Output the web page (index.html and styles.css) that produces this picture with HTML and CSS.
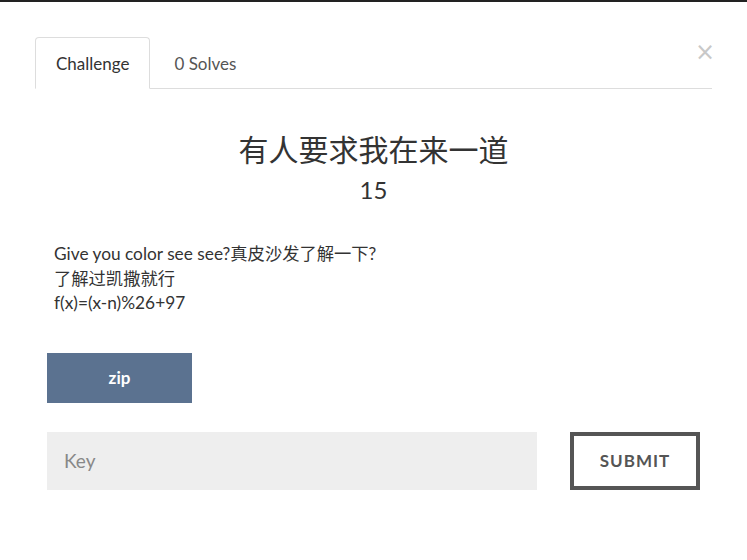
FILE: index.html
```html
<!DOCTYPE html>
<html lang="zh">
<head>
<meta charset="utf-8">
<title>Challenge</title>
<link rel="stylesheet" href="styles.css">
</head>
<body>
<div class="topbar"></div>
<div class="modal">
  <div class="close">&times;</div>
  <ul class="tabs">
    <li class="tab active">Challenge</li>
    <li class="tab">0 Solves</li>
  </ul>
  <h2 class="title">有人要求我在来一道</h2>
  <h3 class="value">15</h3>
  <div class="desc">
    <p>Give you color see see?真皮沙发了解一下?<br>了解过凯撒就行<br>f(x)=(x-n)%26+97</p>
  </div>
  <div class="files">
    <a class="file-btn">zip</a>
  </div>
  <div class="submit-row">
    <input class="key" type="text" placeholder="Key">
    <button class="submit">SUBMIT</button>
  </div>
</div>
</body>
</html>
```
FILE: styles.css
```css
html, body {
  margin: 0;
  padding: 0;
  background: #fff;
  font-family: "Lato", "Noto Sans CJK SC", sans-serif;
  color: #333;
}
.topbar {
  height: 2px;
  background: #222;
}
.modal {
  position: relative;
  margin: 0 35px;
  padding-top: 35px;
}
.close {
  position: absolute;
  right: -3px;
  top: 35px;
  font-size: 24px;
  line-height: 30px;
  color: #c8c8c8;
  font-family: "DejaVu Sans", sans-serif;
}
.tabs {
  list-style: none;
  margin: 0;
  padding: 0;
  display: flex;
  border-bottom: 1px solid #ddd;
}
.tab {
  padding: 0 20px;
  height: 50px;
  line-height: 52px;
  font-size: 17px;
  color: #555;
  margin-right: 3px;
  margin-bottom: -1px;
  border: 1px solid transparent;
  border-radius: 4px 4px 0 0;
}
.tab.active {
  color: #333;
  border-color: #ddd;
  border-bottom-color: #fff;
  background: #fff;
}
.title {
  margin: 42px 0 0;
  text-align: center;
  font-weight: 400;
  font-size: 30px;
  line-height: 36px;
  color: #333;
}
.value {
  margin: 8px 0 0;
  text-align: center;
  font-weight: 400;
  font-size: 24px;
  line-height: 30px;
  color: #333;
}
.desc {
  padding: 0 19px;
  margin-top: 37px;
}
.desc p {
  margin: 0;
  font-size: 17.3px;
  line-height: 24.5px;
}
.files {
  margin-top: 37px;
  padding-left: 12px;
}
.file-btn {
  display: flex;
  align-items: center;
  justify-content: center;
  width: 145px;
  height: 50px;
  background: #5b7290;
  color: #fff;
  font-weight: 700;
  font-size: 17px;
}
.submit-row {
  display: flex;
  margin-top: 29px;
  padding-left: 12px;
  gap: 33px;
}
.key {
  width: 490px;
  height: 58px;
  box-sizing: border-box;
  border: none;
  background: #eee;
  padding: 0 17px;
  font-family: "Lato", sans-serif;
  font-size: 19px;
  color: #333;
  outline: none;
}
.key::placeholder {
  color: #888;
}
.submit {
  width: 130px;
  height: 58px;
  box-sizing: border-box;
  border: 4px solid #555;
  background: #fff;
  font-family: "Lato", sans-serif;
  font-weight: 700;
  font-size: 17px;
  letter-spacing: 1px;
  color: #555;
  padding: 0;
}
```
